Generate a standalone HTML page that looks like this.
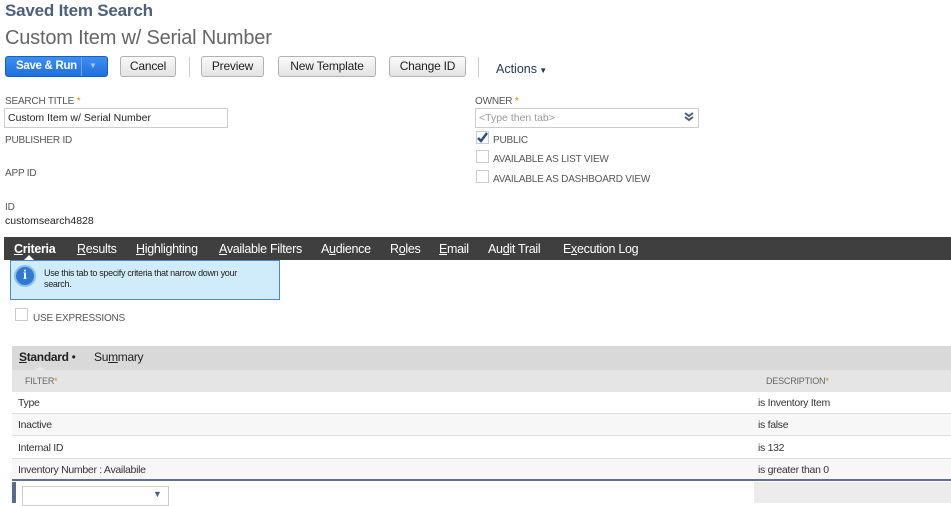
<!DOCTYPE html>
<html><head><style>
*{margin:0;padding:0;box-sizing:border-box}
body{width:951px;height:503px;overflow:hidden;background:#fff;font-family:"Liberation Sans",sans-serif;color:#333;position:relative}
.a{position:absolute;white-space:nowrap}
.btn{position:absolute;top:56px;height:21px;border:1px solid #b2b2b2;border-radius:3px;background:linear-gradient(#fafafa,#e3e3e3);font-size:12px;color:#222;text-align:center;line-height:19px;letter-spacing:-.2px}
.lbl{font-size:10px;color:#555;letter-spacing:-.2px}
.star{color:#d68b00}
.cb{position:absolute;width:13px;height:13px;border:1px solid #ccc;background:#fff}
.tab{position:absolute;top:242px;font-size:12.5px;color:#fff;letter-spacing:-.3px}
.row{position:absolute;left:12px;width:939px;height:22px;border-bottom:1px solid #ddd;font-size:10.5px;letter-spacing:-.3px;color:#333;line-height:22px}
.row span{position:absolute}
</style></head><body>
<div class="a" style="left:5px;top:1px;font-size:17px;font-weight:bold;color:#4d5f79;letter-spacing:-.2px">Saved Item Search</div>
<div class="a" style="left:5px;top:27px;font-size:20px;color:#666;letter-spacing:-.2px">Custom Item w/ Serial Number</div>

<div class="btn" style="left:5px;width:103px;background:linear-gradient(#3d8ff0,#1f6fde);border-color:#1a5fc0;color:#fff;font-weight:bold;text-align:left;padding-left:10px;font-size:11.5px;letter-spacing:-.3px">Save &amp; Run</div>
<div class="a" style="left:81px;top:57px;width:1px;height:19px;background:#6aa7f2"></div>
<div class="a" style="left:89px;top:61px;font-size:8px;color:#a8c8f5">▼</div>
<div class="btn" style="left:120px;width:56px">Cancel</div>
<div class="a" style="left:189px;top:57px;width:1px;height:20px;background:#ccc"></div>
<div class="btn" style="left:201px;width:63px">Preview</div>
<div class="btn" style="left:278px;width:98px">New Template</div>
<div class="btn" style="left:389px;width:77px">Change ID</div>
<div class="a" style="left:478px;top:57px;width:1px;height:20px;background:#ccc"></div>
<div class="a" style="left:496px;top:62px;font-size:12.5px;color:#24385b">Actions<span style="font-size:8px"> ▼</span></div>

<div class="a lbl" style="left:5px;top:96px">SEARCH TITLE <span class="star">*</span></div>
<div class="a" style="left:4px;top:108px;width:224px;height:20px;border:1px solid #ccc;font-size:10.5px;line-height:18px;padding-left:3px;color:#222">Custom Item w/ Serial Number</div>
<div class="a lbl" style="left:5px;top:135px">PUBLISHER ID</div>
<div class="a lbl" style="left:5px;top:168px">APP ID</div>
<div class="a lbl" style="left:5px;top:202px">ID</div>
<div class="a" style="left:5px;top:215px;font-size:10.5px;color:#222">customsearch4828</div>

<div class="a lbl" style="left:475px;top:96px">OWNER <span class="star">*</span></div>
<div class="a" style="left:475px;top:108px;width:224px;height:20px;border:1px solid #ccc;font-size:10.5px;line-height:18px;padding-left:3px;color:#999">&lt;Type then tab&gt;</div>
<svg class="a" style="left:684px;top:112px" width="10" height="10" viewBox="0 0 10 10"><path d="M1 1l4 3 4-3M1 5l4 3 4-3" fill="none" stroke="#4d5f79" stroke-width="2"/></svg>
<div class="cb" style="left:476px;top:131px"></div>
<svg class="a" style="left:476px;top:131px" width="13" height="13" viewBox="0 0 13 13"><path d="M2 7l3 3 6-8" fill="none" stroke="#24508f" stroke-width="2.5"/></svg>
<div class="a lbl" style="left:493px;top:135px">PUBLIC</div>
<div class="cb" style="left:476px;top:150px"></div>
<div class="a lbl" style="left:493px;top:154px">AVAILABLE AS LIST VIEW</div>
<div class="cb" style="left:476px;top:170px"></div>
<div class="a lbl" style="left:493px;top:174px">AVAILABLE AS DASHBOARD VIEW</div>

<div class="a" style="left:4px;top:237px;width:947px;height:23px;background:#3f3f3f"></div>
<div class="tab" style="left:14px;font-weight:bold"><u>C</u>riteria</div>
<div class="tab" style="left:77px"><u>R</u>esults</div>
<div class="tab" style="left:136px"><u>H</u>ighlighting</div>
<div class="tab" style="left:219px"><u>A</u>vailable Filters</div>
<div class="tab" style="left:321px">A<u>u</u>dience</div>
<div class="tab" style="left:390px">R<u>o</u>les</div>
<div class="tab" style="left:439px"><u>E</u>mail</div>
<div class="tab" style="left:488px">Au<u>d</u>it Trail</div>
<div class="tab" style="left:563px">E<u>x</u>ecution Log</div>
<div class="a" style="left:24px;top:255px;width:0;height:0;border-left:5px solid transparent;border-right:5px solid transparent;border-bottom:5px solid #fff"></div>

<div class="a" style="left:10px;top:260px;width:270px;height:40px;background:#d0ecfa;border:1px solid #4a86c8"></div>
<div class="a" style="left:14px;top:265px;width:22px;height:22px;border-radius:50%;background:#2f7bd0;border:2px solid #8fbfef;color:#fff;font-weight:bold;font-size:14px;text-align:center;line-height:18px;font-family:'Liberation Serif',serif">i</div>
<div class="a" style="left:44px;top:268px;font-size:9px;line-height:11px;color:#222;letter-spacing:-.3px">Use this tab to specify criteria that narrow down your<br>search.</div>

<div class="cb" style="left:15px;top:308px"></div>
<div class="a lbl" style="left:33px;top:313px">USE EXPRESSIONS</div>

<div class="a" style="left:12px;top:346px;width:939px;height:24px;background:#d9d9d9"></div>
<div class="a" style="left:19px;top:350px;font-size:12px;color:#222;font-weight:bold;letter-spacing:-.3px"><u>S</u>tandard <span style="font-weight:normal">•</span></div>
<div class="a" style="left:94px;top:350px;font-size:12px;color:#222;letter-spacing:-.3px">Su<u>m</u>mary</div>
<div class="a" style="left:35px;top:366px;width:0;height:0;border-left:5px solid transparent;border-right:5px solid transparent;border-bottom:4px solid #e5e5e5"></div>
<div class="a" style="left:12px;top:370px;width:939px;height:22px;background:#e5e5e5"></div>
<div class="a lbl" style="left:25px;top:376px;font-size:9px;color:#666">FILTER<span class="star">*</span></div>
<div class="a lbl" style="left:766px;top:376px;font-size:9px;color:#666">DESCRIPTION<span class="star">*</span></div>
<div class="row" style="top:392px;background:#fff"><span style="left:6px">Type</span><span style="left:746px">is Inventory Item</span></div>
<div class="row" style="top:414px;background:#f7f7f7"><span style="left:6px">Inactive</span><span style="left:746px">is false</span></div>
<div class="row" style="top:437px;background:#fff"><span style="left:6px">Internal ID</span><span style="left:746px">is 132</span></div>
<div class="row" style="top:459px;background:#f7f7f7;border-bottom:2px solid #607090"><span style="left:6px">Inventory Number : Availabile</span><span style="left:746px">is greater than 0</span></div>
<div class="a" style="left:12px;top:482px;width:4px;height:21px;background:#5a6c8c"></div>
<div class="a" style="left:22px;top:486px;width:147px;height:20px;border:1px solid #ccc;background:#fff"></div>
<div class="a" style="left:153px;top:489px;font-size:9px;color:#4d5f79">▼</div>
<div class="a" style="left:754px;top:482px;width:197px;height:21px;background:#ececec"></div>
</body></html>
